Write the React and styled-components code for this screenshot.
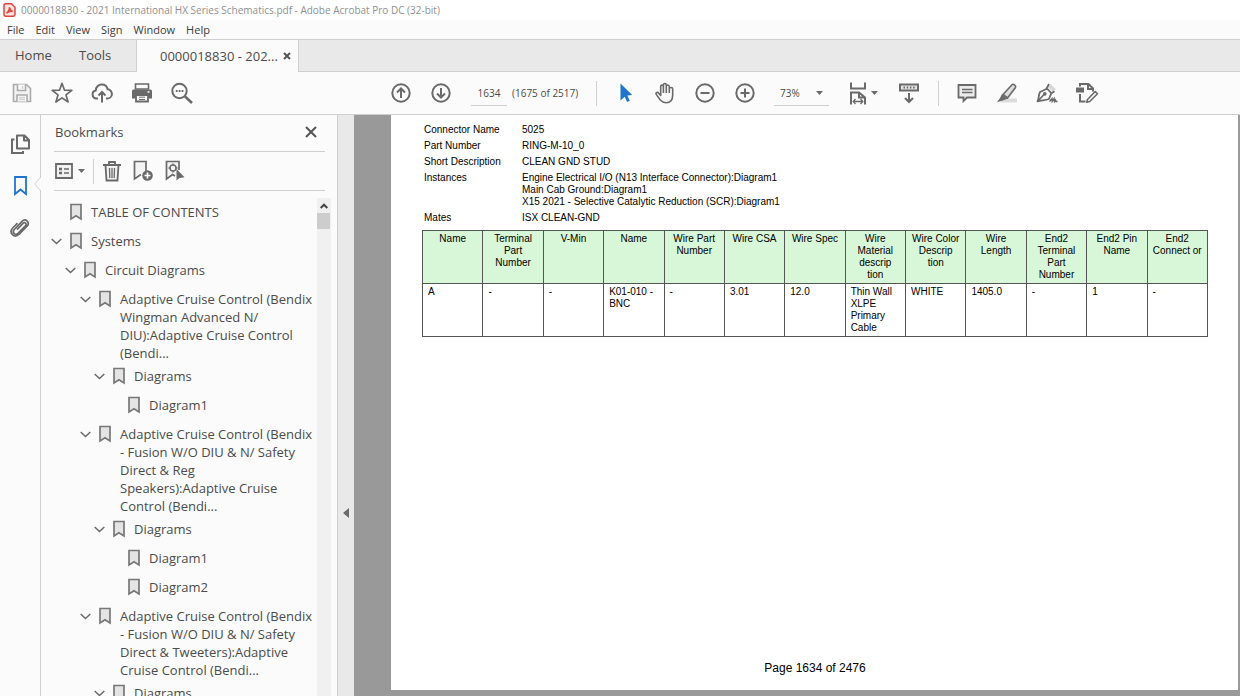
import React from "react";
import styled, { createGlobalStyle } from "styled-components";

const GlobalStyle = createGlobalStyle`
  *, *::before, *::after { box-sizing: border-box; }
  body { margin: 0; background: #fbfbfb; overflow: hidden; }
  button, input, select { font: inherit; color: inherit; }
`;

const ui = `"Segoe UI", "Open Sans", "Noto Sans", sans-serif`;
const line = "#cfcfcf";
const ink = "#6a6a6a";

const Window = styled.div`
  height: 100vh;
  display: flex;
  flex-direction: column;
  background: #fbfbfb;
  color: #4b4b4b;
  font-family: ${ui};
`;

const TitleBar = styled.header`
  flex: none;
  display: flex;
  align-items: center;
  gap: 5px;
  height: 20px;
  padding-left: 3px;
  background: #fff;
  color: #8f8f8f;
  font-size: 10px;
  line-height: 20px;
`;

const MenuBar = styled.nav`
  flex: none;
  display: flex;
  gap: 11px;
  height: 19px;
  padding-left: 7px;
`;

const MenuItem = styled.button`
  border: 0;
  background: none;
  padding: 0;
  font-size: 11px;
  line-height: 18px;
  color: #3c3c3c;
`;

const TabBar = styled.div`
  flex: none;
  display: flex;
  height: 33px;
  background: #e9e9e9;
  border-top: 1px solid ${line};
  border-bottom: 1px solid ${line};
`;

const Tab = styled.button`
  width: 68px;
  border: 0;
  padding: 0 0 0 ${(p) => p.$inset}px;
  background: none;
  font-size: 13px;
  line-height: 31px;
  text-align: left;
`;

const ActiveTab = styled.div`
  display: flex;
  align-items: center;
  justify-content: space-between;
  width: 163px;
  height: 32px;
  padding: 0 7px 0 23px;
  background: #fbfbfb;
  border-left: 1px solid ${line};
  border-right: 1px solid ${line};
  font-size: 13px;
  line-height: 31px;
`;

const TabLabel = styled.span`
  white-space: nowrap;
`;

const CloseButton = styled.button`
  display: flex;
  border: 0;
  padding: 0;
  background: none;
`;

const Toolbar = styled.div`
  flex: none;
  display: flex;
  align-items: center;
  height: 43px;
  padding-left: 2px;
  border-bottom: 1px solid ${line};
  font-size: 10px;
`;

const ToolGroup = styled.div`
  display: flex;
  align-items: center;
  margin-left: ${(p) => p.$gap || 0}px;
`;

const Tool = styled.button`
  display: flex;
  align-items: center;
  justify-content: center;
  width: ${(p) => p.$width || 40}px;
  height: 40px;
  flex: none;
  border: 0;
  padding: 0;
  background: none;
`;

const Divider = styled.div`
  flex: none;
  width: 1px;
  height: 25px;
  margin: 0 ${(p) => p.$after}px 0 ${(p) => p.$before}px;
  background: #d0d0d0;
`;

const PageInput = styled.input`
  width: 36px;
  height: 25px;
  margin: 0 5px 0 10px;
  padding: 0;
  border: 0;
  border-bottom: 1px solid ${line};
  background: none;
  text-align: center;
`;

const PageCount = styled.span`
  width: 66px;
  white-space: nowrap;
`;

const ZoomField = styled.div`
  display: flex;
  align-items: center;
  position: relative;
  width: 55px;
  height: 25px;
  margin: 0 20px 0 9px;
  border-bottom: 1px solid ${line};
  svg {
    position: absolute;
    right: 6px;
    pointer-events: none;
  }
`;

const ZoomSelect = styled.select`
  appearance: none;
  width: 100%;
  height: 24px;
  border: 0;
  padding: 0 0 0 6px;
  background: none;
`;

const Workspace = styled.div`
  flex: 1;
  min-height: 0;
  display: flex;
`;

const Rail = styled.nav`
  flex: none;
  position: relative;
  width: 41px;
  padding-top: 8px;
  border-right: 1px solid ${line};
`;

const RailButton = styled(Tool)`
  height: 42px;
`;

const Notch = styled.svg`
  position: absolute;
  right: -1px;
  top: 62px;
`;

const Panel = styled.aside`
  flex: none;
  display: flex;
  flex-direction: column;
  width: 297px;
  padding-left: 13px;
  border-right: 1px solid ${line};
`;

const PanelHeader = styled.div`
  flex: none;
  display: flex;
  align-items: center;
  justify-content: space-between;
  height: 37px;
  margin-right: 12px;
  padding: 0 8px 2px 1px;
  border-bottom: 1px solid ${line};
`;

const PanelTitle = styled.h2`
  margin: 0;
  font-size: 13px;
  font-weight: 400;
`;

const PanelTools = styled.div`
  flex: none;
  display: flex;
  align-items: center;
  height: 39px;
  margin-right: 12px;
  border-bottom: 1px solid ${line};
`;

const TreeArea = styled.div`
  flex: 1;
  min-height: 0;
  display: flex;
  padding-top: 7px;
`;

const Tree = styled.ul`
  flex: 1;
  overflow: hidden;
  margin: 0 0 0 -5px;
  padding: 0;
  list-style: none;
  font-size: 13px;
  line-height: 18px;
`;

const TreeRow = styled.li`
  display: flex;
  align-items: flex-start;
  min-height: 29px;
  padding-top: 5px;
  padding-left: ${(p) => Math.floor((p.$depth * 29) / 2)}px;
`;

const Twisty = styled.button`
  flex: none;
  display: flex;
  align-items: center;
  width: 21px;
  height: 18px;
  border: 0;
  padding: 0 0 0 2px;
  background: none;
`;

const TreeIcon = styled.span`
  flex: none;
  display: flex;
  align-items: center;
  width: 21px;
  height: 18px;
`;

const TreeLabel = styled.span`
  white-space: pre;
`;

const ScrollBar = styled.div`
  flex: none;
  width: 14px;
  margin-right: 6px;
  background: #f0f0f0;
`;

const ScrollUp = styled.button`
  display: flex;
  align-items: center;
  justify-content: center;
  width: 14px;
  height: 15px;
  border: 0;
  padding: 0;
  background: none;
`;

const ScrollThumb = styled.div`
  width: 13px;
  height: 16px;
  background: #cdcdcd;
`;

const Splitter = styled.div`
  flex: none;
  width: 16px;
  padding-top: 392px;
  background: #e9e9e9;
`;

const SplitterButton = styled(CloseButton)`
  width: 16px;
  height: 12px;
  align-items: center;
  justify-content: center;
`;

const Canvas = styled.main`
  flex: 1;
  min-width: 0;
  display: flex;
  padding: 0 2px 6px 37px;
  background: #999;
`;

const Page = styled.article`
  flex: 1;
  min-width: 0;
  display: flex;
  flex-direction: column;
  padding: 9px 30px 14px 31px;
  background: #fff;
  color: #000;
  font-family: Arial, "Liberation Sans", sans-serif;
  font-size: 10px;
  line-height: 12px;
`;

const Details = styled.dl`
  display: grid;
  grid-template-columns: 98px 1fr;
  row-gap: 4px;
  margin: 0 0 6px;
  padding-left: 2px;
`;

const Term = styled.dt`
  margin: 0;
`;

const Value = styled.dd`
  margin: 0;
  white-space: pre-line;
`;

const WireTable = styled.table`
  width: 100%;
  table-layout: fixed;
  border-collapse: collapse;
  border: 1px solid #333;
`;

const HeadCell = styled.th`
  padding: 2px 4px;
  border: 1px solid #555;
  background: #d8f6d8;
  font-weight: 400;
  text-align: center;
  vertical-align: top;
  white-space: pre-line;
`;

const Cell = styled.td`
  padding: 2px 0 2px 5px;
  border: 1px solid #555;
  vertical-align: top;
  white-space: pre-line;
`;

const PageFooter = styled.footer`
  margin-top: auto;
  text-align: center;
  font-size: 12px;
  line-height: 16px;
`;

function Icon({ size = 24, width, height, color = ink, stroke = 2, children }) {
  const w = width || size;
  const h = height || size;
  return (
    <svg width={w} height={h} viewBox={`0 0 ${w} ${h}`} fill="none" stroke={color} strokeWidth={stroke} aria-hidden="true">
      {children}
    </svg>
  );
}

const Caret = () => (
  <Icon width={7} height={4} stroke={0}><path d="M0 0h7L3.5 4z" fill={ink} /></Icon>
);

const Cross = ({ size, stroke }) => (
  <Icon size={size} stroke={stroke} color="#555"><path d={`M1 1L${size - 1} ${size - 1}M${size - 1} 1L1 ${size - 1}`} /></Icon>
);

const AcrobatIcon = () => (
  <Icon width={13} height={14} color="#e0463c" stroke={1.5}>
    <path d="M2.500 .8h6L12 4.200v7.300a1.700 1.700 0 0 1-1.700 1.700H2.700A1.700 1.700 0 0 1 1 11.500V2.500A1.600 1.600 0 0 1 2.500 .8z" fill="#fbe6e4" />
    <path d="M3.500 10.200C5.500 9 6.800 6 6.300 4.200c1 3 2 4 3.500 4.300-2-.4-4.300 0-6.300 1.700z" />
  </Icon>
);

const SaveIcon = () => (
  <Icon color="#ababab" stroke={1.6}>
    <path d="M3.500 3.500h13l4 4v13h-17z" fill="#f2f2f2" />
    <path d="M7.500 3.500v6h8v-6M7 20.500v-6.500h10v6.500" fill="#fbfbfb" />
    <path d="M12.500 5v3M9 16.500h6M9 18.500h6" stroke="#d2d2d2" />
  </Icon>
);

const StarIcon = () => (
  <Icon stroke={1.7}><path d="M12 2.300l2.500 6.900 7.300.2-5.800 4.500 2.100 7.100L12 16.900l-6.100 4.100L8 13.900 2.200 9.400l7.300-.2z" strokeLinejoin="round" /></Icon>
);

const CloudIcon = () => (
  <Icon><path d="M8 17.500H6.500a4 4 0 0 1-.8-7.900c0-3.700 2.800-6.100 6-6.100 3.200 0 5.400 2 5.900 4.800a4.600 4.600 0 0 1-.6 9.200h-1M12 21.500v-10M8.500 14.500l3.500-3.500 3.500 3.500" /></Icon>
);

const PrintIcon = () => (
  <Icon stroke={0}>
    <path d="M5.500 3h13v5h-13z" stroke={ink} strokeWidth={1.600} fill="#fbfbfb" />
    <path d="M3.500 8.500h17a1.500 1.500 0 0 1 1.500 1.500v7.500H2V10a1.500 1.500 0 0 1 1.500-1.500z" fill={ink} />
    <path d="M6 14h12v6.500H6z" stroke={ink} strokeWidth={1.800} fill="#fbfbfb" />
    <path d="M9 16.200h6M9 18.500h6" stroke={ink} strokeWidth={1} />
    <path d="M17.500 10.200h2v1.500h-2z" fill="#fbfbfb" />
  </Icon>
);

const SearchIcon = () => (
  <Icon>
    <circle cx="9.500" cy="10" r="7.200" />
    <path d="M15 15.500l7 6.500" strokeWidth={2.600} />
    <path d="M5.800 10h1.800M8.700 10h1.800M11.600 10h1.800" />
  </Icon>
);

const CircleIcon = ({ d }) => (
  <Icon><circle cx="12" cy="12" r="8.700" /><path d={d} /></Icon>
);

const PointerIcon = () => (
  <Icon stroke={0}><path d="M7.500 2.500v17l4.200-3.700 2.400 5.200 2.700-1.200-2.400-5.200 4.800-.6z" fill="#1f75cb" /></Icon>
);

const HandIcon = () => (
  <Icon stroke={1.600}><path d="M7.700 14.500V5.600c0-2 2.700-2 2.700 0V4c0-2 2.900-2 2.900 0v1.500c0-2 3-2 3 .2v2.100c0-1.800 3.400-1.800 3.400.2v6c0 5-2.500 7.800-6.500 7.800-4.300 0-6-2.600-10-8.600-.9-1.600 1.400-2.600 2.600-1zM10.400 5.600V12M13.300 5v7M16.300 6v6" strokeLinejoin="round" /></Icon>
);

const FitIcon = () => (
  <Icon width={16} height={24}>
    <path d="M1 1.500v6h14v-6M1 23.500V11.500h8l6 5v7M9 11.500v5h6" />
    <path d="M3.500 20.500h9M5.500 18l-2.300 2.500L5.500 23M10.500 18l2.300 2.500-2.300 2.500" strokeWidth={1.300} />
  </Icon>
);

const RulerIcon = () => (
  <Icon><path d="M3 3.500h18v6H3z" fill="#e4e4e4" /><path d="M6.500 6.500h1.500M9.700 6.500h1.500M12.900 6.500h1.500M16.100 6.500h1.500" /><path d="M12 12v9M8 17l4 4 4-4" /></Icon>
);

const CommentIcon = () => (
  <Icon stroke={1.800}><path d="M3.500 4h17v12.500h-8.500L8.500 20v-3.500h-5z" fill="#ececec" /><path d="M7 8.500h10.500M7 11.500h10.500" strokeWidth={1.400} /></Icon>
);

const HighlightIcon = () => (
  <Icon stroke={1.600}>
    <path d="M9 17.500h13v4H5z" fill="#dcdcdc" stroke="none" />
    <path d="M8 13.500L17 3.700c1.400-1.300 4.600 1.200 3.500 2.900L12.500 17z" fill="#dcdcdc" />
    <path d="M7 13l5.500 4.800-4 1.500-6.500 2L5 17z" fill={ink} stroke="none" />
  </Icon>
);

const SignIcon = () => (
  <Icon stroke={1.700}>
    <path d="M14 4.500l5.500 5" stroke="#d8d8d8" strokeWidth={4} />
    <path d="M2.500 20.500c1.500-3 1-6.500 2.500-9.500 2-1.200 4.800-1.800 7-3.500l4.500 4.800c-1.300 1.800-1.600 4-2.700 5.700-3.500 1.500-7.500 1.200-11.300 2.500zL9 13.500M11.500 7.500l2.500-4.500M16.500 12.300l3-2" strokeLinejoin="round" />
    <circle cx="9.800" cy="12.800" r="1" />
    <path d="M14.500 20.500l2.500-3 .2 3 2-3 .3 3 1-1.500.5 1.500h1.500" strokeWidth={1.400} />
  </Icon>
);

const EditPdfIcon = () => (
  <Icon>
    <path d="M5 5.500V3h8.500l4.500 4.500v3M13 3v5h5M5 13v7.500h5.500" />
    <path d="M1 6.500h8v5H1z" fill={ink} stroke="none" />
    <path d="M12.500 18.500l7.700-8 2.300 2.300-7.800 7.700-2.900.7z" fill="#fbfbfb" strokeWidth={1.600} strokeLinejoin="round" />
  </Icon>
);

const PagesIcon = () => (
  <Icon><path d="M9 3.500h7.500l4.500 4.500v8.500H9zM16 4v4.500h5" strokeLinejoin="round" /><path d="M6.500 7.500H4v13.500h11V19" /></Icon>
);

const ClipIcon = () => (
  <Icon stroke={1.700}><path d="M9 13.700l6.200-6.500c1.600-1.600 4 .7 2.500 2.300l-7.500 7.700c-3 2.900-6.500-.9-3.900-3.700L14 5.300c3.700-3.500 8.400 1.200 5 4.900l-7.800 8c-5 4.700-10.700-1.500-6.500-6.200l4.800-4.900" /></Icon>
);

const Ribbon = ({ color }) => (
  <Icon width={13} height={20} color={color} stroke={1.800}><path d="M1 1h11v17l-5.500-4.500L1 18z" /></Icon>
);

const BookmarkIcon = () => (
  <Icon width={12} height={18} stroke={1.700} color="#777"><path d="M1 1.500h10v14.500l-5-3.200L1 16z" fill="#e4e4e4" /></Icon>
);

const OptionsIcon = () => (
  <Icon width={18} height={16} stroke={1.800}>
    <path d="M1 1h16v14H1z" fill="#f1f1f1" />
    <path d="M4 6h3M4 10h3" strokeWidth={2.500} /><path d="M9 6h5M9 10h5" strokeWidth={1.600} />
  </Icon>
);

const TrashIcon = () => (
  <Icon width={20} height={22} stroke={1.800}>
    <path d="M3.500 5.500l1 15h11l1-15" fill="#f1f1f1" />
    <path d="M1 5h18M7 4.500V2h6v2.500" />
    <path d="M7.500 8l.3 10M10 8v10M12.500 8l-.3 10" strokeWidth={1.300} />
  </Icon>
);

const AddBookmarkIcon = () => (
  <Icon width={20} height={22} stroke={1.700}>
    <path d="M8 14.500L1.500 19V1.500H13V11" fill="#f4f4f4" />
    <circle cx="14.500" cy="15.500" r="5.300" fill={ink} stroke="none" />
    <path d="M14.500 12.500v6M11.500 15.500h6" stroke="#fff" />
  </Icon>
);

const FindBookmarkIcon = () => (
  <Icon width={20} height={22} stroke={1.700}>
    <path d="M14 10V1.500H1.500V19l6-4.500 2.500 1.500" fill="#f4f4f4" />
    <circle cx="8" cy="8" r="3" strokeWidth={1.400} />
    <path d="M8 3.500v2M8 10.500v2M3.500 8h2M10.500 8h2" strokeWidth={1.400} />
    <path d="M11.500 9v11.500l3-2.500 5-.7z" fill={ink} stroke="none" />
  </Icon>
);

const Chevron = () => (
  <Icon width={11} height={7} stroke={1.500}><path d="M.7 1l4.800 4.500L10.300 1" /></Icon>
);

const bookmarks = [
  { depth: 0, label: "TABLE OF CONTENTS" },
  { depth: 0, open: true, label: "Systems" },
  { depth: 1, open: true, label: "Circuit Diagrams" },
  { depth: 2, open: true, label: "Adaptive Cruise Control (Bendix\nWingman Advanced N/\nDIU):Adaptive Cruise Control\n(Bendi..." },
  { depth: 3, open: true, label: "Diagrams" },
  { depth: 4, label: "Diagram1" },
  { depth: 2, open: true, label: "Adaptive Cruise Control (Bendix\n- Fusion W/O DIU & N/ Safety\nDirect & Reg\nSpeakers):Adaptive Cruise\nControl (Bendi..." },
  { depth: 3, open: true, label: "Diagrams" },
  { depth: 4, label: "Diagram1" },
  { depth: 4, label: "Diagram2" },
  { depth: 2, open: true, label: "Adaptive Cruise Control (Bendix\n- Fusion W/O DIU & N/ Safety\nDirect & Tweeters):Adaptive\nCruise Control (Bendi..." },
  { depth: 3, open: true, label: "Diagrams" },
];

const details = [
  ["Connector Name", "5025"],
  ["Part Number", "RING-M-10_0"],
  ["Short Description", "CLEAN GND STUD"],
  ["Instances", "Engine Electrical I/O (N13 Interface Connector):Diagram1\nMain Cab Ground:Diagram1\nX15 2021 - Selective Catalytic Reduction (SCR):Diagram1"],
  ["Mates", "ISX CLEAN-GND"],
];

const columns = [
  ["Name", "A"],
  ["Terminal\nPart\nNumber", "-"],
  ["V-Min", "-"],
  ["Name", "K01-010 -\nBNC"],
  ["Wire Part\nNumber", "-"],
  ["Wire CSA", "3.01"],
  ["Wire Spec", "12.0"],
  ["Wire\nMaterial\ndescrip\ntion", "Thin Wall\nXLPE\nPrimary\nCable"],
  ["Wire Color\nDescrip\ntion", "WHITE"],
  ["Wire\nLength", "1405.0"],
  ["End2\nTerminal\nPart\nNumber", "-"],
  ["End2 Pin\nName", "1"],
  ["End2\nConnect or", "-"],
];

export default function App() {
  return (
    <Window>
      <GlobalStyle />
      <TitleBar>
        <AcrobatIcon />
        <span>0000018830 - 2021 International HX Series Schematics.pdf - Adobe Acrobat Pro DC (32-bit)</span>
      </TitleBar>
      <MenuBar aria-label="Menu">
        {["File", "Edit", "View", "Sign", "Window", "Help"].map((m) => <MenuItem key={m}>{m}</MenuItem>)}
      </MenuBar>
      <TabBar>
        <Tab $inset={15}>Home</Tab>
        <Tab $inset={11}>Tools</Tab>
        <ActiveTab>
          <TabLabel>0000018830 - 202...</TabLabel>
          <CloseButton aria-label="Close tab"><Cross size={8} stroke={2} /></CloseButton>
        </ActiveTab>
      </TabBar>
      <Toolbar>
        <ToolGroup>
          <Tool aria-label="Save"><SaveIcon /></Tool>
          <Tool aria-label="Star"><StarIcon /></Tool>
          <Tool aria-label="Upload"><CloudIcon /></Tool>
          <Tool aria-label="Print"><PrintIcon /></Tool>
          <Tool aria-label="Find"><SearchIcon /></Tool>
        </ToolGroup>
        <ToolGroup $gap={179}>
          <Tool aria-label="Previous page"><CircleIcon d="M12 17V7.500M8 11.500l4-4 4 4" /></Tool>
          <Tool aria-label="Next page"><CircleIcon d="M12 7v9.500M8 12.500l4 4 4-4" /></Tool>
          <PageInput aria-label="Page number" defaultValue="1634" />
          <PageCount>(1675 of 2517)</PageCount>
        </ToolGroup>
        <Divider $before={18} $after={8} />
        <ToolGroup>
          <Tool aria-label="Select"><PointerIcon /></Tool>
          <Tool aria-label="Pan"><HandIcon /></Tool>
          <Tool aria-label="Zoom out"><CircleIcon d="M7.500 12h9" /></Tool>
          <Tool aria-label="Zoom in"><CircleIcon d="M7.500 12h9M12 7.500v9" /></Tool>
          <ZoomField>
            <ZoomSelect aria-label="Zoom level" defaultValue="73%"><option>73%</option><option>100%</option></ZoomSelect>
            <Caret />
          </ZoomField>
          <Tool aria-label="Fit width" $width={17}><FitIcon /></Tool>
          <Tool aria-label="Fit options" $width={17}><Caret /></Tool>
          <Tool aria-label="Page display" $width={51}><RulerIcon /></Tool>
        </ToolGroup>
        <Divider $before={4} $after={8} />
        <ToolGroup>
          <Tool aria-label="Comment"><CommentIcon /></Tool>
          <Tool aria-label="Highlight"><HighlightIcon /></Tool>
          <Tool aria-label="Sign"><SignIcon /></Tool>
          <Tool aria-label="Edit PDF"><EditPdfIcon /></Tool>
        </ToolGroup>
      </Toolbar>
      <Workspace>
        <Rail aria-label="Side panels">
          <RailButton aria-label="Page thumbnails"><PagesIcon /></RailButton>
          <RailButton aria-label="Bookmarks"><Ribbon color="#1f75cb" /></RailButton>
          <RailButton aria-label="Attachments"><ClipIcon /></RailButton>
          <Notch width="7" height="14" viewBox="0 0 7 14" aria-hidden="true">
            <path d="M7 0L.7 7 7 14" fill="#fbfbfb" stroke={line} />
          </Notch>
        </Rail>
        <Panel>
          <PanelHeader>
            <PanelTitle>Bookmarks</PanelTitle>
            <CloseButton aria-label="Close panel"><Cross size={12} stroke={2} /></CloseButton>
          </PanelHeader>
          <PanelTools>
            <Tool aria-label="Options" $width={20}><OptionsIcon /></Tool>
            <Tool aria-label="Options menu" $width={14}><Caret /></Tool>
            <Divider $before={5} $after={3} />
            <Tool aria-label="Delete bookmark" $width={30}><TrashIcon /></Tool>
            <Tool aria-label="New bookmark" $width={32}><AddBookmarkIcon /></Tool>
            <Tool aria-label="Find bookmark" $width={32}><FindBookmarkIcon /></Tool>
          </PanelTools>
          <TreeArea>
            <Tree>
              {bookmarks.map((b, i) => (
                <TreeRow key={i} $depth={b.depth}>
                  <Twisty aria-label={b.open ? "Collapse" : undefined} as={b.open ? "button" : "span"}>{b.open && <Chevron />}</Twisty>
                  <TreeIcon><BookmarkIcon /></TreeIcon>
                  <TreeLabel>{b.label}</TreeLabel>
                </TreeRow>
              ))}
            </Tree>
            <ScrollBar>
              <ScrollUp aria-label="Scroll up"><Icon width={8} height={6} color="#444"><path d="M.7 5L4 1.700 7.300 5" /></Icon></ScrollUp>
              <ScrollThumb />
            </ScrollBar>
          </TreeArea>
        </Panel>
        <Splitter>
          <SplitterButton aria-label="Collapse panel">
            <Icon width={6} height={10} stroke={0}><path d="M6 0v10L0 5z" fill={ink} /></Icon>
          </SplitterButton>
        </Splitter>
        <Canvas>
          <Page>
            <Details>
              {details.map(([term, value]) => (
                <React.Fragment key={term}>
                  <Term>{term}</Term>
                  <Value>{value}</Value>
                </React.Fragment>
              ))}
            </Details>
            <WireTable>
              <thead><tr>{columns.map(([head], i) => <HeadCell key={i} scope="col">{head}</HeadCell>)}</tr></thead>
              <tbody><tr>{columns.map(([, cell], i) => <Cell key={i}>{cell}</Cell>)}</tr></tbody>
            </WireTable>
            <PageFooter>Page 1634 of 2476</PageFooter>
          </Page>
        </Canvas>
      </Workspace>
    </Window>
  );
}
